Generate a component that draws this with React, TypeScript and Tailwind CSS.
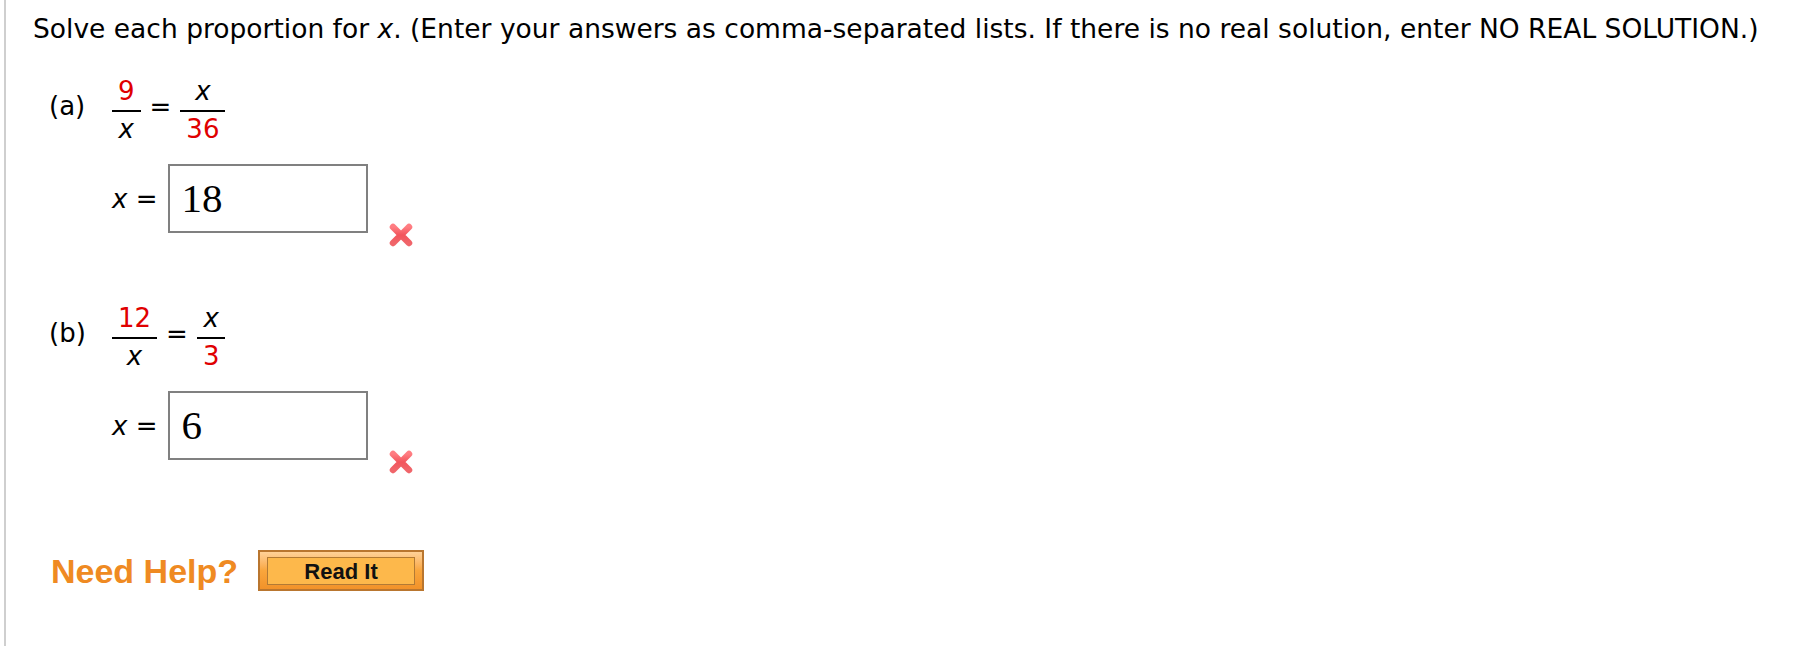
import React from "react";

const sans = { fontFamily: '"DejaVu Sans", Verdana, sans-serif' };

function Frac({ num, den }: { num: React.ReactNode; den: React.ReactNode }) {
  return (
    <span className="inline-flex flex-col text-center text-[26px] leading-[26px]">
      <span className="px-[6px] pb-[6px] border-b-2 border-black">{num}</span>
      <span className="px-[6px] pt-[4px]">{den}</span>
    </span>
  );
}

const X = () => <i className="italic">x</i>;
const Red = ({ children }: { children: React.ReactNode }) => (
  <span className="text-[#e00000]">{children}</span>
);

function WrongMark() {
  return (
    <svg width="26" height="26" viewBox="0 0 26 26" className="ml-[20px] self-end mb-[-15px]">
      <defs>
        <linearGradient id="xg" x1="0" y1="0" x2="0" y2="1">
          <stop offset="0" stopColor="#ff7d82" />
          <stop offset="0.5" stopColor="#f2555c" />
          <stop offset="1" stopColor="#f0656a" />
        </linearGradient>
      </defs>
      <path d="M5 5 L21 21 M21 5 L5 21" stroke="url(#xg)" strokeWidth="6.5" strokeLinecap="round" fill="none" />
    </svg>
  );
}

function Part({ label, eq, answer, className }: { label: string; eq: React.ReactNode; answer: string; className?: string }) {
  return (
    <div className={"ml-[16px] " + (className ?? "")}>
      <div className="flex items-center">
        <span className="w-[63px] text-[26px] leading-[26px] mb-[8px]">{label}</span>
        {eq}
      </div>
      <div className="flex items-center pl-[63px] mt-[22px]">
        <span className="text-[26px] leading-[26px] mr-[11px]">
          <X /> =
        </span>
        <div
          className="w-[200px] h-[69px] border-2 border-[#808080] bg-white flex items-center pl-[11px] text-[41px] leading-none text-black"
          style={{ fontFamily: '"Liberation Serif", "Times New Roman", serif' }}
        >
          {answer}
        </div>
        <WrongMark />
      </div>
    </div>
  );
}

export default function App() {
  return (
    <div className="min-h-[646px] bg-white pl-[4px]">
      <div className="min-h-[646px] border-l-2 border-[#cfcfcf] pl-[27px] pt-[16px] text-black" style={sans}>
        <p className="text-[26.5px] leading-[26px] whitespace-nowrap">
          Solve each proportion for <X />. (Enter your answers as comma-separated lists. If there is no real solution, enter NO REAL SOLUTION.)
        </p>

        <Part
          className="mt-[36px]"
          label="(a)"
          answer="18"
          eq={
            <>
              <Frac num={<Red>9</Red>} den={<X />} />
              <span className="text-[26px] leading-[26px] px-[9px] mb-[6px]">=</span>
              <Frac num={<X />} den={<Red>36</Red>} />
            </>
          }
        />

        <Part
          className="mt-[72px]"
          label="(b)"
          answer="6"
          eq={
            <>
              <Frac num={<Red>12</Red>} den={<X />} />
              <span className="text-[26px] leading-[26px] px-[9px] mb-[6px]">=</span>
              <Frac num={<X />} den={<Red>3</Red>} />
            </>
          }
        />

        <div className="flex items-center mt-[90px] ml-[18px]" style={{ fontFamily: '"Liberation Sans", Arial, sans-serif' }}>
          <span className="text-[34px] leading-none font-bold text-[#ef8a22]">Need Help?</span>
          <button className="ml-[20px] w-[166px] h-[41px] border-2 border-[#b9762f] bg-gradient-to-b from-[#ffd197] via-[#f9a63c] to-[#f29229] px-[7px] pt-[5px] pb-[4px] flex">
            <span className="flex-1 flex items-center justify-center border border-[#b27a35] bg-[#fdb84b] text-[22px] font-bold text-[#111]">
              Read It
            </span>
          </button>
        </div>
      </div>
    </div>
  );
}
